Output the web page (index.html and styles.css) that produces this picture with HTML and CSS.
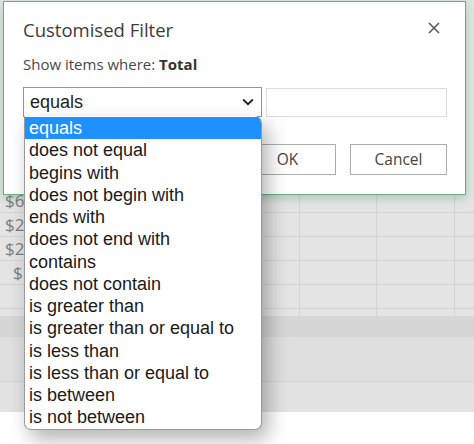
FILE: index.html
```html
<!DOCTYPE html>
<html>
<head>
<meta charset="utf-8">
<link rel="stylesheet" href="styles.css">
</head>
<body>
<div class="sheet">
  <div class="sheet-top"></div>
  <div class="row"><div class="cell a">$6</div><div class="cell b"></div><div class="cell c"></div><div class="cell d"></div></div>
  <div class="row"><div class="cell a">$2</div><div class="cell b"></div><div class="cell c"></div><div class="cell d"></div></div>
  <div class="row"><div class="cell a">$2</div><div class="cell b"></div><div class="cell c"></div><div class="cell d"></div></div>
  <div class="row"><div class="cell a short">$</div><div class="cell b"></div><div class="cell c"></div><div class="cell d"></div></div>
  <div class="row"><div class="cell a"></div><div class="cell b"></div><div class="cell c"></div><div class="cell d"></div></div>
  <div class="row stub"><div class="cell a"></div><div class="cell b"></div><div class="cell c"></div><div class="cell d"></div></div>
  <div class="band band-1"></div>
  <div class="band band-2"></div>
  <div class="band band-3"></div>
</div>

<div class="dialog">
  <div class="dialog-head">
    <div class="dialog-title">Customised Filter</div>
    <svg class="close" width="12" height="12" viewBox="0 0 12 12"><path d="M1 1 L11 11 M11 1 L1 11" stroke="#555" stroke-width="1.5" fill="none"/></svg>
  </div>
  <div class="dialog-sub">Show items where: <b>Total</b></div>
  <div class="field-row">
    <div class="select"><span>equals</span><svg width="12" height="8" viewBox="0 0 12 8"><path d="M1.2 1.5 L6 6.2 L10.8 1.5" stroke="#222" stroke-width="1.8" fill="none"/></svg></div>
    <div class="textbox"></div>
  </div>
  <div class="buttons">
    <div class="btn">OK</div>
    <div class="btn">Cancel</div>
  </div>
</div>

<ul class="options">
  <li class="selected">equals</li>
  <li>does not equal</li>
  <li>begins with</li>
  <li>does not begin with</li>
  <li>ends with</li>
  <li>does not end with</li>
  <li>contains</li>
  <li>does not contain</li>
  <li>is greater than</li>
  <li>is greater than or equal to</li>
  <li>is less than</li>
  <li>is less than or equal to</li>
  <li>is between</li>
  <li>is not between</li>
</ul>
</body>
</html>
```

FILE: styles.css
```css
html, body {
  margin: 0;
  padding: 0;
}
body {
  width: 474px;
  height: 444px;
  overflow: hidden;
  position: relative;
  background: #ffffff;
  font-family: "Open Sans", "Noto Sans", sans-serif;
}

/* background spreadsheet */
.sheet {
  display: flex;
  flex-direction: column;
}
.sheet-top {
  height: 189px;
  background: #dfe6e1;
}
.row {
  display: flex;
  height: 24px;
  background: #e4e4e4;
}
.row.stub {
  height: 7px;
}
.cell {
  box-sizing: border-box;
  height: 100%;
  border-right: 1px solid #d3d3d3;
  border-bottom: 1px solid #d3d3d3;
}
.row.stub .cell {
  border-bottom: none;
}
.cell.a {
  width: 300px;
  padding-left: 5px;
  font-size: 17px;
  line-height: 23px;
  color: #7d7d7d;
  white-space: nowrap;
  overflow: hidden;
}
.cell.a.short {
  padding-left: 13px;
}
.cell.b { width: 77px; }
.cell.c { width: 78px; }
.cell.d { flex: 1; border-right: none; }
.band-1 {
  height: 21px;
  background: #d6d6d6;
}
.band-2 {
  height: 44px;
  background: #dfdfdf;
  border-bottom: 1px solid #d2d2d2;
}
.band-3 {
  height: 30px;
  background: #e2e2e2;
}

/* dialog (modal overlay) */
.dialog {
  position: absolute;
  left: 3px;
  top: 1px;
  box-sizing: border-box;
  width: 463px;
  height: 194px;
  background: #ffffff;
  border: 1px solid #6cae86;
  box-shadow: 0 3px 9px rgba(60, 140, 95, 0.35);
  padding: 15px 18px 0 19px;
  display: flex;
  flex-direction: column;
}
.dialog-head {
  display: flex;
  justify-content: space-between;
  align-items: center;
  height: 26px;
}
.dialog-title {
  font-size: 18.5px;
  line-height: 26px;
  color: #3c3c3c;
}
.close {
  margin-right: 7px;
  margin-top: -5px;
}
.dialog-sub {
  margin-top: 11px;
  font-size: 15px;
  line-height: 20px;
  color: #484848;
}
.dialog-sub b {
  color: #333;
  font-weight: 700;
}
.field-row {
  display: flex;
  gap: 4px;
  margin-top: 13px;
  align-items: flex-start;
}
.select {
  box-sizing: border-box;
  width: 239px;
  height: 30px;
  border: 1px solid #969696;
  display: flex;
  align-items: center;
  justify-content: space-between;
  padding: 0 7px 0 6px;
  font-family: "Liberation Sans", Arial, sans-serif;
  font-size: 18px;
  color: #1e1e1e;
}
.textbox {
  box-sizing: border-box;
  width: 181px;
  height: 29px;
  margin-top: 1px;
  border: 1px solid #dcdcdc;
}
.buttons {
  display: flex;
  justify-content: flex-end;
  gap: 14px;
  margin-top: 27px;
}
.btn {
  box-sizing: border-box;
  width: 97px;
  height: 31px;
  border: 1px solid #adadad;
  background: #fff;
  font-size: 15.5px;
  line-height: 29px;
  text-align: center;
  color: #444;
}

/* dropdown list (overlay) */
.options {
  position: absolute;
  left: 24px;
  top: 116px;
  width: 238px;
  margin: 0;
  padding: 1px 0 0 0;
  list-style: none;
  box-sizing: border-box;
  background: #fff;
  border: 1px solid #9a9a9a;
  border-top: none;
  border-radius: 0 7px 7px 7px;
  overflow: hidden;
  box-shadow: 6px 9px 20px rgba(0, 0, 0, 0.3);
  font-family: "Liberation Sans", Arial, sans-serif;
  font-size: 18px;
  color: #1a1a1a;
}
.options li {
  height: 22.25px;
  line-height: 22.25px;
  padding-left: 4px;
  white-space: nowrap;
}
.options li.selected {
  background: #1e90ff;
  color: #fff;
}
```
